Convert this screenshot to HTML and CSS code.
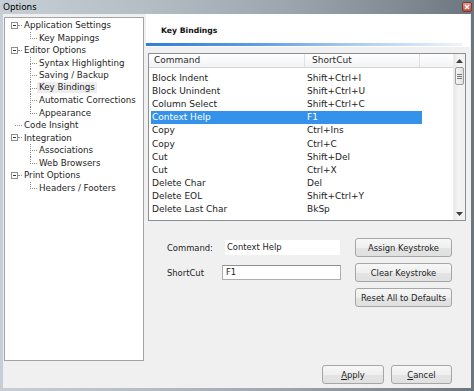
FILE: index.html
```html
<!DOCTYPE html>
<html lang="en">
<head>
    <meta charset="UTF-8">
    <title>Options</title>
    <link rel="stylesheet" href="styles.css">
</head>
<body>
<div class="window">
    <div class="titlebar">
        <span class="title">Options</span>
        <span class="close">
            <svg width="6" height="6" viewBox="0 0 6 6"><path d="M1 1L5 5M5 1L1 5" stroke="#fff" stroke-width="1.4"/></svg>
        </span>
    </div>

    <div class="client">
        <div class="main">
            <!-- option tree -->
            <div class="tree">
                <ul>
                    <li class="root">
                        <div class="row"><span class="box"></span><span class="dash"></span><span class="label">Application Settings</span></div>
                        <ul class="children">
                            <li><div class="row"><span class="label">Key Mappings</span></div></li>
                        </ul>
                    </li>
                    <li class="root">
                        <div class="row"><span class="box"></span><span class="dash"></span><span class="label">Editor Options</span></div>
                        <ul class="children">
                            <li><div class="row"><span class="label">Syntax Highlighting</span></div></li>
                            <li><div class="row"><span class="label">Saving / Backup</span></div></li>
                            <li><div class="row"><span class="label sel">Key Bindings</span></div></li>
                            <li><div class="row"><span class="label">Automatic Corrections</span></div></li>
                            <li><div class="row"><span class="label">Appearance</span></div></li>
                        </ul>
                    </li>
                    <li class="root leaf">
                        <div class="row"><span class="dash long"></span><span class="label">Code Insight</span></div>
                    </li>
                    <li class="root">
                        <div class="row"><span class="box"></span><span class="dash"></span><span class="label">Integration</span></div>
                        <ul class="children">
                            <li><div class="row"><span class="label">Associations</span></div></li>
                            <li><div class="row"><span class="label">Web Browsers</span></div></li>
                        </ul>
                    </li>
                    <li class="root">
                        <div class="row"><span class="box"></span><span class="dash"></span><span class="label">Print Options</span></div>
                        <ul class="children">
                            <li><div class="row"><span class="label">Headers / Footers</span></div></li>
                        </ul>
                    </li>
                </ul>
            </div>

            <!-- settings page -->
            <div class="pane">
                <div class="pane-head">
                    <h1>Key Bindings</h1>
                    <div class="rule"></div>
                </div>

                <div class="list">
                    <div class="lv">
                        <div class="lv-head">
                            <div class="hcol h1">Command</div>
                            <div class="hcol h2">ShortCut</div>
                            <div class="hcol h3"></div>
                        </div>
                        <div class="rows">
                            <div class="item"><span class="c1">Block Indent</span><span class="c2">Shift+Ctrl+I</span></div>
                            <div class="item"><span class="c1">Block Unindent</span><span class="c2">Shift+Ctrl+U</span></div>
                            <div class="item"><span class="c1">Column Select</span><span class="c2">Shift+Ctrl+C</span></div>
                            <div class="item selected"><span class="c1">Context Help</span><span class="c2">F1</span></div>
                            <div class="item"><span class="c1">Copy</span><span class="c2">Ctrl+Ins</span></div>
                            <div class="item"><span class="c1">Copy</span><span class="c2">Ctrl+C</span></div>
                            <div class="item"><span class="c1">Cut</span><span class="c2">Shift+Del</span></div>
                            <div class="item"><span class="c1">Cut</span><span class="c2">Ctrl+X</span></div>
                            <div class="item"><span class="c1">Delete Char</span><span class="c2">Del</span></div>
                            <div class="item"><span class="c1">Delete EOL</span><span class="c2">Shift+Ctrl+Y</span></div>
                            <div class="item"><span class="c1">Delete Last Char</span><span class="c2">BkSp</span></div>
                        </div>
                    </div>
                    <div class="scrollbar">
                        <div class="arrow">
                            <svg width="7" height="4" viewBox="0 0 7 4"><path d="M0 4L3.5 0L7 4Z" fill="#404040"/></svg>
                        </div>
                        <div class="thumb"><span></span><span></span><span></span></div>
                        <div class="track"></div>
                        <div class="arrow">
                            <svg width="7" height="4" viewBox="0 0 7 4"><path d="M0 0L3.5 4L7 0Z" fill="#404040"/></svg>
                        </div>
                    </div>
                </div>

                <div class="form">
                    <span class="lbl">Command:</span>
                    <span class="static">Context Help</span>
                    <button class="btn">Assign Keystroke</button>

                    <span class="lbl">ShortCut</span>
                    <span class="edit">F1</span>
                    <button class="btn">Clear Keystroke</button>

                    <button class="btn reset">Reset All to Defaults</button>
                </div>
            </div>
        </div>

        <div class="footer">
            <button class="btn apply"><u>A</u>pply</button>
            <button class="btn cancel"><u>C</u>ancel</button>
        </div>
    </div>
</div>
</body>
</html>
```

FILE: styles.css
```css
* { box-sizing: border-box; }

html, body {
    margin: 0;
    padding: 0;
}
body {
    width: 474px;
    height: 391px;
    overflow: hidden;
    font-family: "DejaVu Sans", Verdana, sans-serif;
    color: #1c1c1c;
    background: #6f7980;
}

/* window frame (aero-ish) */
.window {
    width: 474px;
    height: 391px;
    display: flex;
    flex-direction: column;
    background: linear-gradient(to right, #c6cfd5 0%, #b4bec5 30%, #9ba6ae 60%, #7f8a92 85%, #6b757d 100%);
}
.titlebar {
    height: 14px;
    flex: none;
    display: flex;
    align-items: center;
    justify-content: space-between;
    padding: 0 2px 0 3px;
}
.title {
    font-family: "Noto Sans", sans-serif;
    font-size: 9px;
    line-height: 12px;
    color: #000;
}
.close {
    width: 10px;
    height: 10px;
    border: 1px solid #7a3b35;
    border-radius: 2px;
    background: linear-gradient(#e39a8e, #c5473c);
    display: flex;
    align-items: center;
    justify-content: center;
}
.client {
    flex: 1;
    margin: 0 3px 3px;
    background: #f0f0f0;
    display: flex;
    flex-direction: column;
}
.main {
    flex: 1;
    display: flex;
    gap: 2px;
    padding: 0 1px;
}

/* tree */
.tree {
    width: 140px;
    flex: none;
    margin-top: 3px;
    background: #fff;
    border: 1px solid #a3a3a3;
    font-size: 8.7px;
    color: #1e1e1e;
}
.tree ul {
    list-style: none;
    margin: 0;
    padding: 0;
}
.tree > ul { padding-top: 1px; }
.row {
    height: 12.5px;
    display: flex;
    align-items: center;
    white-space: nowrap;
}
.root > .row { padding-left: 6px; }
.root.leaf > .row { padding-left: 10px; }
.box {
    position: relative;
    flex: none;
    width: 7px;
    height: 7px;
    border: 1px solid #8e8e8e;
    background: #fff;
}
.box::after {
    content: "";
    position: absolute;
    left: 1px;
    top: 2px;
    width: 3px;
    height: 1px;
    background: #333;
}
.dash {
    flex: none;
    width: 4px;
    margin-right: 2px;
    border-top: 1px dotted #8e8e8e;
}
.dash.long { width: 7px; }
.children li { position: relative; }
.children .row { padding-left: 34px; }
.children li::before {
    content: "";
    position: absolute;
    left: 25px;
    top: 0;
    width: 6px;
    height: 6px;
    border-left: 1px dotted #8e8e8e;
    border-bottom: 1px dotted #8e8e8e;
}
.children li:not(:last-child)::after {
    content: "";
    position: absolute;
    left: 25px;
    top: 6px;
    bottom: 0;
    border-left: 1px dotted #8e8e8e;
}
.label.sel {
    background: #ededed;
    margin-left: -2px;
    padding: 0 2px;
    line-height: 11px;
}

/* right page */
.pane {
    flex: 1;
    display: flex;
    flex-direction: column;
}
.pane-head {
    height: 33px;
    flex: none;
    background: #fff;
    display: flex;
    flex-direction: column;
    justify-content: flex-end;
    padding-bottom: 1px;
}
.pane-head h1 {
    margin: 0 0 7px 15px;
    font-size: 7.7px;
    line-height: 10px;
    font-weight: bold;
    color: #111;
}
.rule {
    height: 3px;
    margin-right: 8px;
    background: linear-gradient(to right, #2f7ed8 0%, #5d9de3 35%, #a9cbef 65%, #eef4fb 100%);
}

/* list view */
.list {
    height: 168px;
    flex: none;
    margin: 6px 4px 0 2px;
    border: 1px solid #8c8f94;
    background: #fff;
    display: flex;
    font-size: 9px;
}
.lv {
    flex: 1;
    overflow: hidden;
}
.lv-head {
    height: 14px;
    display: flex;
    border-bottom: 1px solid #d6d6d6;
    background: linear-gradient(#ffffff, #f2f3f5);
    color: #2a2a2a;
}
.hcol {
    line-height: 13px;
    border-right: 1px solid #e0e0e0;
}
.h1 { width: 156px; padding-left: 5px; }
.h2 { width: 115px; padding-left: 7px; }
.h3 { flex: 1; border-right: none; }
.rows { padding-top: 3px; }
.item {
    height: 13.2px;
    width: 271px;
    margin-left: 2px;
    display: flex;
    align-items: center;
    white-space: nowrap;
}
.c1 { width: 154px; padding-left: 1px; }
.c2 { flex: 1; padding-left: 2px; }
.item.selected {
    background: #3592ea;
    color: #fff;
}

.scrollbar {
    width: 12px;
    flex: none;
    display: flex;
    flex-direction: column;
    background: linear-gradient(to right, #e8e8e8, #f4f4f4 40%, #f0f0f0);
    border-left: 1px solid #ececec;
}
.arrow {
    height: 13px;
    display: flex;
    align-items: center;
    justify-content: center;
}
.thumb {
    height: 18px;
    margin: 0 1px;
    border: 1px solid #9b9b9b;
    border-radius: 2px;
    background: linear-gradient(to right, #f4f4f4, #e3e3e3);
    display: flex;
    flex-direction: column;
    align-items: center;
    justify-content: center;
    gap: 1px;
}
.thumb span {
    width: 5px;
    height: 1px;
    background: #777;
}
.track { flex: 1; }

/* edit area */
.form {
    margin: 17px 0 0 21px;
    display: grid;
    grid-template-columns: 55px 119px 111px;
    grid-auto-rows: 19px;
    row-gap: 6px;
    align-items: center;
    font-size: 8.4px;
}
.lbl { color: #222; }
.static {
    height: 15px;
    margin: 0 1px 0 3px;
    padding-left: 2px;
    line-height: 15px;
    background: #fff;
}
.edit {
    height: 15px;
    padding-left: 3px;
    line-height: 13px;
    background: #fff;
    border: 1px solid #abadb3;
    border-top-color: #8e9097;
}
.btn {
    height: 19px;
    padding: 0;
    font: inherit;
    font-size: 8.4px;
    color: #1e1e1e;
    border: 1px solid #a6a6a6;
    border-radius: 3px;
    background: linear-gradient(#f7f7f7 0%, #efefef 50%, #e4e4e4 51%, #e0e0e0 100%);
}
.form .btn {
    width: 97px;
    justify-self: end;
}
.reset { grid-column: 3; }

.footer {
    flex: none;
    display: flex;
    justify-content: flex-end;
    gap: 7px;
    padding: 4px 19px 4px 0;
}
.apply { width: 62px; }
.cancel { width: 61px; }
.btn u { text-decoration-thickness: 1px; }
```
